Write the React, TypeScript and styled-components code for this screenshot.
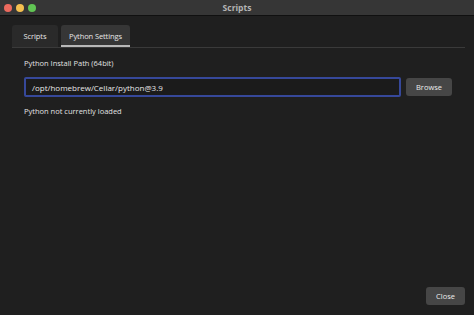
import styled, { createGlobalStyle } from "styled-components";

const GlobalStyle = createGlobalStyle`
    html, body {
        margin: 0;
        padding: 0;
        background: #1f1f1f;
    }
    body {
        font-family: "Open Sans", "Liberation Sans", sans-serif;
        -webkit-font-smoothing: antialiased;
    }
`;

const Window = styled.div`
    width: 474px;
    height: 315px;
    display: flex;
    flex-direction: column;
    background-color: #1f1f1f;
    overflow: hidden;
`;

const TitleBar = styled.div`
    height: 15px;
    display: grid;
    grid-template-columns: 1fr auto 1fr;
    align-items: center;
    background-color: #363636;
    border-bottom: 1px solid #101010;
`;

const Lights = styled.div`
    display: flex;
    gap: 4px;
    padding-left: 4px;
`;

const Light = styled.span<{ $color: string }>`
    width: 8px;
    height: 8px;
    border-radius: 50%;
    background-color: ${({ $color }) => $color};
`;

const Title = styled.div`
    font-size: 8.5px;
    font-weight: 700;
    color: #b4b4b4;
`;

const Body = styled.div`
    flex: 1;
    display: flex;
    flex-direction: column;
    padding: 9px 9px 10px 12px;
`;

const TabBar = styled.div`
    display: flex;
    gap: 3px;
    border-bottom: 1px solid #3a3a3a;
`;

const Tab = styled.div<{ $active?: boolean }>`
    height: 22px;
    min-width: 46px;
    box-sizing: border-box;
    padding: 0 8px;
    display: flex;
    align-items: center;
    justify-content: center;
    font-size: 7.5px;
    letter-spacing: -0.1px;
    color: #e6e6e6;
    border-radius: 3px 3px 0 0;
    background-color: ${({ $active }) => ($active ? "#363636" : "#2a2a2a")};
    box-shadow: ${({ $active }) => ($active ? "inset 0 -2px 0 #b8b8b8" : "none")};
`;

const Panel = styled.div`
    flex: 1;
    display: flex;
    flex-direction: column;
    padding: 9px 0 0 12px;
`;

const Label = styled.div`
    font-size: 7.5px;
    color: #e2e2e2;
    line-height: 12px;
`;

const PathRow = styled.div`
    display: flex;
    align-items: center;
    gap: 5px;
    margin-top: 8px;
`;

const PathInput = styled.div`
    width: 367px;
    height: 16px;
    display: flex;
    align-items: center;
    padding-left: 6px;
    border: 2px solid #36489a;
    border-radius: 2px;
    background-color: #1b1b1b;
    font-size: 8px;
    color: #e8e8e8;
`;

const Button = styled.div`
    height: 18px;
    padding: 0 10px;
    display: flex;
    align-items: center;
    justify-content: center;
    border-radius: 3px;
    background-color: #464646;
    font-size: 7.5px;
    color: #ececec;
`;

const Status = styled(Label)`
    margin-top: 8px;
`;

const Footer = styled.div`
    display: flex;
    justify-content: flex-end;
`;

export default function App() {
    return (
        <Window>
            <GlobalStyle />
            <TitleBar>
                <Lights>
                    <Light $color="#ec6a5e" />
                    <Light $color="#f4bf4f" />
                    <Light $color="#61c554" />
                </Lights>
                <Title>Scripts</Title>
                <div />
            </TitleBar>
            <Body>
                <TabBar>
                    <Tab>Scripts</Tab>
                    <Tab $active>Python Settings</Tab>
                </TabBar>
                <Panel>
                    <Label>Python Install Path (64bit)</Label>
                    <PathRow>
                        <PathInput>/opt/homebrew/Cellar/python@3.9</PathInput>
                        <Button>Browse</Button>
                    </PathRow>
                    <Status>Python not currently loaded</Status>
                </Panel>
                <Footer>
                    <Button>Close</Button>
                </Footer>
            </Body>
        </Window>
    );
}
